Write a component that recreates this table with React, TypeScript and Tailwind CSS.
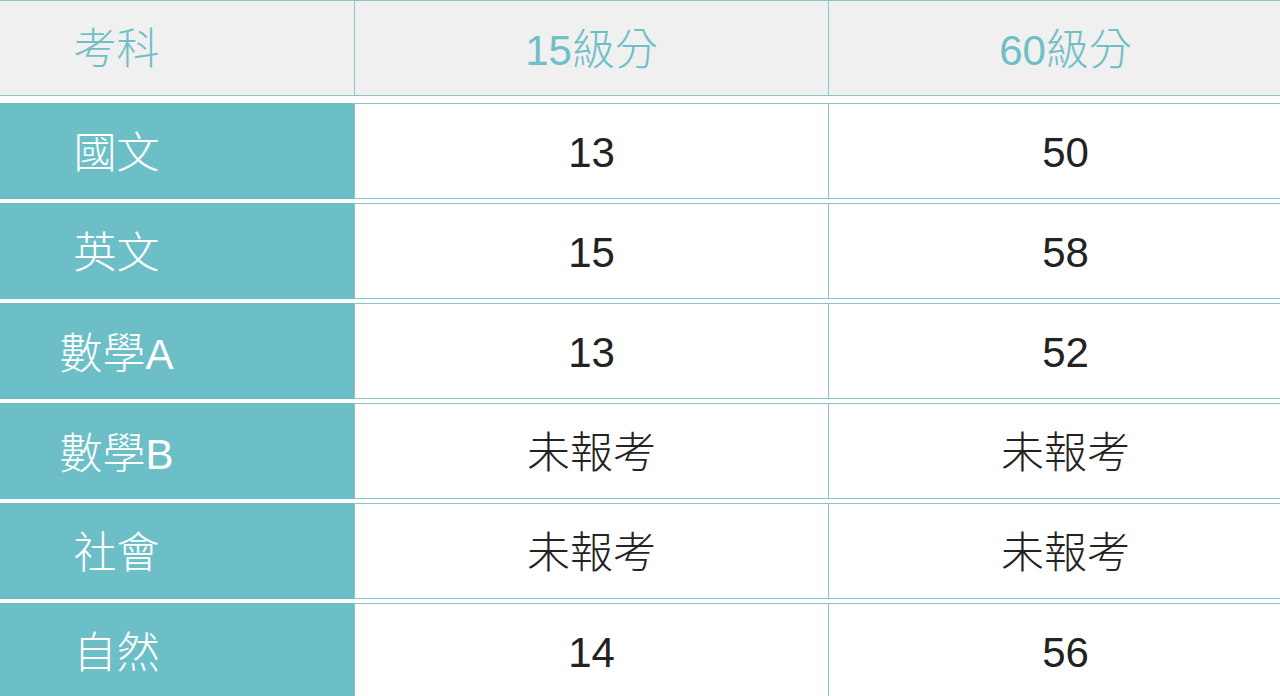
import React from "react";

const rows: [string, string, string][] = [
  ["國文", "13", "50"],
  ["英文", "15", "58"],
  ["數學A", "13", "52"],
  ["數學B", "未報考", "未報考"],
  ["社會", "未報考", "未報考"],
  ["自然", "14", "56"],
];

function T({ s }: { s: string }) {
  const parts = s.match(/[\x00-\x7f]+|[^\x00-\x7f]+/g) || [];
  const pureCjk = !/[\x00-\x7f]/.test(s);
  return (
    <span className={pureCjk ? "mb-[6px]" : ""}>
      {parts.map((p, i) =>
        /^[\x00-\x7f]+$/.test(p) ? (
          <span
            key={i}
            className="font-normal text-[42px]"
            style={{ fontFamily: '"Liberation Sans", sans-serif' }}
          >
            {p}
          </span>
        ) : (
          <span
            key={i}
            className="font-light text-[43px]"
            style={{ fontFamily: '"Noto Sans CJK TC", sans-serif' }}
          >
            {p}
          </span>
        )
      )}
    </span>
  );
}

export default function App() {
  return (
    <div className="w-[1280px] h-[696px] overflow-hidden bg-white">
      <div className="flex h-[96px] bg-[#f0f0f0] border-t border-b border-[#8ec4c9] text-[#6fbfc7]">
        <div className="w-[354px] shrink-0 flex items-center justify-center pr-[121px]">
          <T s="考科" />
        </div>
        <div className="w-[474px] shrink-0 border-l border-[#8ec4c9] flex items-center justify-center">
          <T s="15級分" />
        </div>
        <div className="w-[474px] shrink-0 border-l border-[#8ec4c9] flex items-center justify-center">
          <T s="60級分" />
        </div>
      </div>
      <div className="flex flex-col gap-[4px] mt-[7px]">
        {rows.map(([name, a, b]) => (
          <div key={name} className="flex h-[96px]">
            <div className="w-[354px] shrink-0 bg-[#6dbfc7] text-white flex items-center justify-center pr-[121px] pt-[2px]">
              <T s={name} />
            </div>
            <div className="w-[474px] shrink-0 border border-r-0 border-[#8ec4c9] text-[#222] flex items-center justify-center pt-[2px]">
              <T s={a} />
            </div>
            <div className="w-[474px] shrink-0 border border-r-0 border-[#8ec4c9] text-[#222] flex items-center justify-center pt-[2px]">
              <T s={b} />
            </div>
          </div>
        ))}
      </div>
    </div>
  );
}
